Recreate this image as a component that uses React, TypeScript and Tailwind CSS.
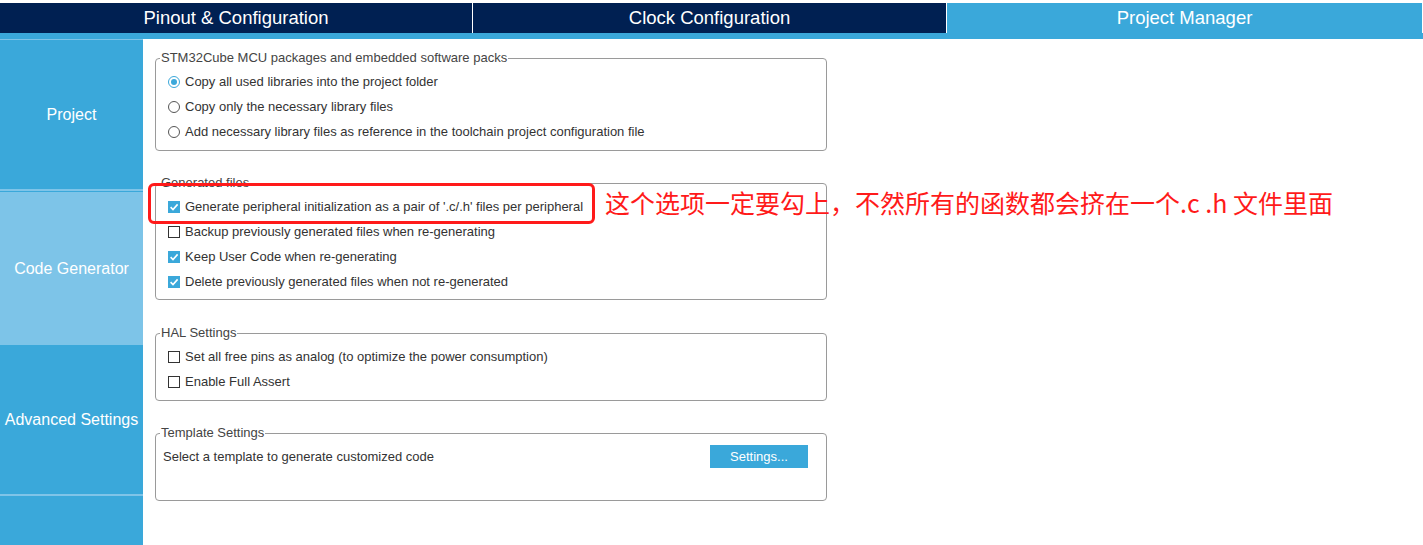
import React from "react";

const Check = ({ checked }: { checked: boolean }) =>
  checked ? (
    <span className="flex h-[12px] w-[12px] shrink-0 items-center justify-center bg-[#3ba8da]">
      <svg width="10" height="10" viewBox="0 0 10 10">
        <path d="M1.6 5.2 L4 7.5 L8.6 2.4" fill="none" stroke="#ffffff" strokeWidth="1.6" />
      </svg>
    </span>
  ) : (
    <span className="h-[12px] w-[12px] shrink-0 border border-[#333333] bg-white" />
  );

const Radio = ({ checked }: { checked: boolean }) =>
  checked ? (
    <span className="flex h-[12px] w-[12px] shrink-0 items-center justify-center rounded-full border border-[#3ba8da] bg-white">
      <span className="h-[6px] w-[6px] rounded-full bg-[#3ba8da]" />
    </span>
  ) : (
    <span className="h-[12px] w-[12px] shrink-0 rounded-full border border-[#555555] bg-white" />
  );

const Row = ({ control, label }: { control: React.ReactNode; label: string }) => (
  <div className="flex h-[25px] items-center gap-[5px] pl-[12px]">
    {control}
    <span className="text-[13px] leading-[15px] text-[#333333]">{label}</span>
  </div>
);

const Group = ({
  title,
  children,
  className,
}: {
  title: string;
  children: React.ReactNode;
  className: string;
}) => (
  <fieldset className={"w-[672px] rounded-[4px] border border-[#9a9a9a] " + className}>
    <legend className="ml-[4px] px-[1px] text-[13px] leading-[14px] text-[#444444]">{title}</legend>
    {children}
  </fieldset>
);

export default function App() {
  return (
    <div className="relative h-[545px] w-[1423px] overflow-hidden bg-white font-['Liberation_Sans',Arial,sans-serif]">
      {/* Header tabs */}
      <div className="pt-[3px]">
        <div className="flex h-[30px] text-[18.5px] text-white">
          <div className="flex w-[472px] items-center justify-center bg-[#002052]">Pinout &amp; Configuration</div>
          <div className="w-[1px] bg-white" />
          <div className="flex w-[473px] items-center justify-center bg-[#002052]">Clock Configuration</div>
          <div className="w-[1px] bg-white" />
          <div className="flex w-[475px] items-center justify-center bg-[#3aa8da]">Project Manager</div>
        </div>
        <div className="h-[6px] bg-[#3aa8da]" />
      </div>

      <div className="flex h-[506px]">
        {/* Sidebar */}
        <div className="flex w-[143px] shrink-0 flex-col bg-[#3aa8da] text-[16px] text-white">
          <div className="h-[1px] bg-[#7fc4e8]" />
          <div className="flex h-[149px] items-center justify-center">Project</div>
          <div className="h-[2px] bg-[#7fc4e8]" />
          <div className="h-[1px] bg-[#3aa8da]" />
          <div className="flex h-[153px] items-center justify-center bg-[#7dc4e8]">Code Generator</div>
          <div className="flex h-[149px] items-center justify-center">Advanced Settings</div>
          <div className="h-[2px] bg-[#7fc4e8]" />
          <div className="flex-1" />
        </div>

        {/* Content */}
        <div className="flex flex-col pl-[12px] pt-[12px]">
          <Group title="STM32Cube MCU packages and embedded software packs" className="pt-[4px] pb-[6px]">
            <Row control={<Radio checked />} label="Copy all used libraries into the project folder" />
            <Row control={<Radio checked={false} />} label="Copy only the necessary library files" />
            <Row
              control={<Radio checked={false} />}
              label="Add necessary library files as reference in the toolchain project configuration file"
            />
          </Group>

          <Group title="Generated files" className="mt-[25px] pt-[4px] pb-[5px]">
            <Row control={<Check checked />} label="Generate peripheral initialization as a pair of '.c/.h' files per peripheral" />
            <Row control={<Check checked={false} />} label="Backup previously generated files when re-generating" />
            <Row control={<Check checked />} label="Keep User Code when re-generating" />
            <Row control={<Check checked />} label="Delete previously generated files when not re-generated" />
          </Group>

          <Group title="HAL Settings" className="mt-[26px] pt-[4px] pb-[6px]">
            <Row control={<Check checked={false} />} label="Set all free pins as analog (to optimize the power consumption)" />
            <Row control={<Check checked={false} />} label="Enable Full Assert" />
          </Group>

          <Group title="Template Settings" className="mt-[25px] pt-[5px] pb-[32px]">
            <div className="flex items-center justify-between pl-[7px] pr-[18px]">
              <span className="text-[13px] leading-[15px] text-[#333333]">Select a template to generate customized code</span>
              <div className="flex h-[23px] w-[98px] items-center justify-center bg-[#3aa8da] text-[13px] text-white">
                Settings...
              </div>
            </div>
          </Group>
        </div>
      </div>

      {/* Red annotation */}
      <div className="absolute left-[148px] top-[183px] h-[41px] w-[447px] rounded-[6px] border-[3.5px] border-[#ff1a1a]" />
      <div className="absolute left-[605px] top-[187px] whitespace-nowrap text-[25px] leading-[30px] text-[#ff1a1a] font-['Noto_Sans_CJK_SC','Noto_Sans',sans-serif]">
        这个选项一定要勾上，不然所有的函数都会挤在一个.c .h 文件里面
      </div>
    </div>
  );
}
